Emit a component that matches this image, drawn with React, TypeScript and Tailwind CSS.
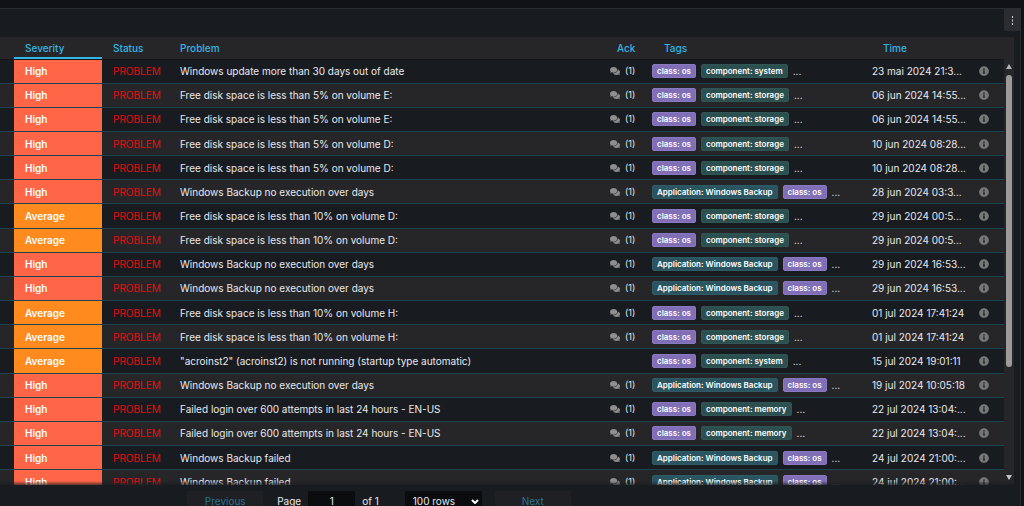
import { FaComments, FaInfoCircle } from "react-icons/fa";

type Row = {
  severity: "High" | "Average";
  problem: string;
  ack: boolean;
  tags: string[];
  time: string;
};

const storage = ["class: os", "component: storage"];
const system = ["class: os", "component: system"];
const memory = ["class: os", "component: memory"];
const backup = ["Application: Windows Backup", "class: os"];

const rows: Row[] = [
  { severity: "High", problem: "Windows update more than 30 days out of date", ack: true, tags: system, time: "23 mai 2024 21:3..." },
  { severity: "High", problem: "Free disk space is less than 5% on volume E:", ack: true, tags: storage, time: "06 jun 2024 14:55..." },
  { severity: "High", problem: "Free disk space is less than 5% on volume E:", ack: true, tags: storage, time: "06 jun 2024 14:55..." },
  { severity: "High", problem: "Free disk space is less than 5% on volume D:", ack: true, tags: storage, time: "10 jun 2024 08:28..." },
  { severity: "High", problem: "Free disk space is less than 5% on volume D:", ack: true, tags: storage, time: "10 jun 2024 08:28..." },
  { severity: "High", problem: "Windows Backup no execution over days", ack: true, tags: backup, time: "28 jun 2024 03:3..." },
  { severity: "Average", problem: "Free disk space is less than 10% on volume D:", ack: true, tags: storage, time: "29 jun 2024 00:5..." },
  { severity: "Average", problem: "Free disk space is less than 10% on volume D:", ack: true, tags: storage, time: "29 jun 2024 00:5..." },
  { severity: "High", problem: "Windows Backup no execution over days", ack: true, tags: backup, time: "29 jun 2024 16:53..." },
  { severity: "High", problem: "Windows Backup no execution over days", ack: true, tags: backup, time: "29 jun 2024 16:53..." },
  { severity: "Average", problem: "Free disk space is less than 10% on volume H:", ack: true, tags: storage, time: "01 jul 2024 17:41:24" },
  { severity: "Average", problem: "Free disk space is less than 10% on volume H:", ack: true, tags: storage, time: "01 jul 2024 17:41:24" },
  { severity: "Average", problem: '"acroinst2" (acroinst2) is not running (startup type automatic)', ack: false, tags: system, time: "15 jul 2024 19:01:11" },
  { severity: "High", problem: "Windows Backup no execution over days", ack: true, tags: backup, time: "19 jul 2024 10:05:18" },
  { severity: "High", problem: "Failed login over 600 attempts in last 24 hours - EN-US", ack: true, tags: memory, time: "22 jul 2024 13:04:..." },
  { severity: "High", problem: "Failed login over 600 attempts in last 24 hours - EN-US", ack: true, tags: memory, time: "22 jul 2024 13:04:..." },
  { severity: "High", problem: "Windows Backup failed", ack: true, tags: backup, time: "24 jul 2024 21:00:..." },
  { severity: "High", problem: "Windows Backup failed", ack: true, tags: backup, time: "24 jul 2024 21:00:..." },
];

const tagColor = (tag: string) => {
  if (tag.startsWith("class")) return "bg-[#806eb7] border-[#8a78c2]";
  if (tag.startsWith("component")) return "bg-[#2c4f4f] border-[#305555]";
  return "bg-[#2a5560] border-[#2f5b66]";
};

function ProblemRow({ row }: { row: Row }) {
  return (
    <tr className="border-b border-[#1d4350] bg-[#181b1f] even:bg-[#262628]">
      <td />
      <td
        className={`pl-[11px] font-semibold text-white ${
          row.severity === "High" ? "bg-[#ff6648]" : "bg-[#ff8b1f]"
        }`}
      >
        {row.severity}
      </td>
      <td className="pl-[11px] text-[#e60d10]">PROBLEM</td>
      <td className="truncate pl-[11px]">{row.problem}</td>
      <td>
        {row.ack && (
          <button type="button" className="flex items-center gap-[5px]" aria-label="Acknowledges">
            <FaComments className="size-[10px] text-[#8e8e90]" />
            <span className="text-[9px]">(1)</span>
          </button>
        )}
      </td>
      <td>
        <div className="flex items-center gap-[5px]">
          {row.tags.map((tag) => (
            <span
              key={tag}
              className={`rounded-xs border px-1 text-[8px] leading-3 font-semibold whitespace-nowrap text-white ${tagColor(tag)}`}
            >
              {tag}
            </span>
          ))}
          <span>...</span>
        </div>
      </td>
      <td className="whitespace-nowrap">{row.time}</td>
      <td>
        <FaInfoCircle className="size-[10px] text-[#77787a]" />
      </td>
      <td />
    </tr>
  );
}

function Scrollbar() {
  return (
    <div className="absolute top-[22px] right-0 bottom-0 flex w-[10px] flex-col items-center bg-[#252629] py-[5px]">
      <svg viewBox="0 0 6 5" className="h-[5px] w-[6px] shrink-0" fill="#b4b4b4">
        <path d="M3 0 6 5H0Z" />
      </svg>
      <div className="mt-[6px] flex min-h-0 w-[6px] flex-1 flex-col">
        <div className="h-[73%] rounded-full bg-[#9b9b9b]" />
      </div>
      <svg viewBox="0 0 6 5" className="h-[5px] w-[6px] shrink-0" fill="#c4c4c4">
        <path d="M0 0H6L3 5Z" />
      </svg>
    </div>
  );
}

function Pagination() {
  return (
    <div className="flex h-[21px] shrink-0 items-start justify-center overflow-hidden pt-[6px] pr-[262px] text-[10px] leading-5">
      <button type="button" disabled className="w-[76px] bg-[#1f2023] text-[#2a7390]">
        Previous
      </button>
      <label htmlFor="page" className="ml-[14px]">
        Page
      </label>
      <input
        id="page"
        defaultValue="1"
        className="mx-[7px] h-5 w-[47px] bg-[#0b0c0e] text-center outline-none"
      />
      <span>of 1</span>
      <div className="relative ml-[26px]">
        <select
          aria-label="Rows per page"
          defaultValue="100"
          className="h-5 w-[77px] appearance-none bg-[#0b0c0e] pl-2 outline-none"
        >
          <option value="50">50 rows</option>
          <option value="100">100 rows</option>
        </select>
        <svg
          viewBox="0 0 8 5"
          className="pointer-events-none absolute top-2 right-[3px] h-[5px] w-2"
          fill="none"
          stroke="#fff"
          strokeWidth="2"
        >
          <path d="m1 1 3 3 3-3" />
        </svg>
      </div>
      <button type="button" disabled className="ml-[13px] w-[76px] bg-[#1f2023] text-[#2a7390]">
        Next
      </button>
    </div>
  );
}

export default function App() {
  return (
    <div className="flex h-screen flex-col overflow-hidden bg-[#111217] pt-2 pr-[3px] font-['Inter',sans-serif] text-[10px] text-[#e8e9ee]">
      <section className="flex min-h-0 flex-1 flex-col border-t border-r border-[#2a2c31] bg-[#181b1f]">
        <div className="flex h-7 shrink-0 justify-end">
          <button
            type="button"
            aria-label="Menu"
            className="flex h-[22px] w-4 items-center justify-center rounded-bl-xs bg-[#2a2c30]"
          >
            <svg viewBox="0 0 1 9" className="h-[9px] w-px" fill="#d0d1d6">
              <path d="M0 0h1v2H0zM0 3.5h1v2H0zM0 7h1v2H0z" />
            </svg>
          </button>
        </div>
        <div className="relative mr-[6px] min-h-0 flex-1 overflow-hidden">
          <table className="w-full table-fixed border-collapse text-left leading-4">
            <colgroup>
              <col className="w-[14px]" />
              <col className="w-[88px]" />
              <col className="w-[67px]" />
              <col />
              <col className="w-[42px]" />
              <col className="w-[220px]" />
              <col className="w-[107px]" />
              <col className="w-[25px]" />
              <col className="w-[10px]" />
            </colgroup>
            <thead>
              <tr className="h-[22px] border-b border-[#15171a] bg-[#262628] text-[#33b5e5] [&>th]:font-medium">
                <th />
                <th className="pl-[11px] shadow-[inset_0_-2px_0_#33b5e5]">Severity</th>
                <th className="pl-[11px]">Status</th>
                <th className="pl-[11px]">Problem</th>
                <th className="pl-[7px]">Ack</th>
                <th className="pl-3">Tags</th>
                <th className="pl-[11px]">Time</th>
                <th />
                <th />
              </tr>
            </thead>
            <tbody className="h-[435px]">
              {rows.map((row, i) => (
                <ProblemRow key={i} row={row} />
              ))}
            </tbody>
          </table>
          <Scrollbar />
          <div className="pointer-events-none absolute inset-x-0 bottom-0 h-1 bg-linear-to-t from-[#181b1f]/70 to-transparent" />
        </div>
        <Pagination />
      </section>
    </div>
  );
}
